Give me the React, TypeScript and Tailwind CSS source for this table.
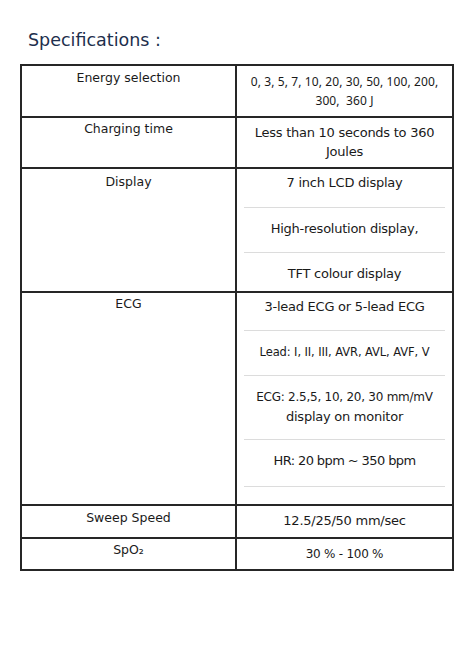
const font = { fontFamily: '"DejaVu Sans", "Noto Sans", sans-serif' };

type Spec = {
  label: React.ReactNode;
  height: string;
  labelPad: string;
  values: { text: React.ReactNode; h: string; cls?: string }[];
  simple?: boolean;
};

// right column text defaults to 13px with slight negative tracking
const specs: Spec[] = [
  {
    label: "Energy selection",
    height: "h-[52px]",
    labelPad: "pt-[3px]",
    values: [
      {
        text: <>0, 3, 5, 7, 10, 20, 30, 50, 100, 200,<br />300, &nbsp;360 J</>,
        h: "",
        cls: "pt-[6px] !text-[12px] !tracking-[0.1px] leading-[19px] font-['Noto_Sans'] whitespace-nowrap",
      },
    ],
    simple: true,
  },
  {
    label: "Charging time",
    height: "h-[51px]",
    labelPad: "pt-[2px]",
    values: [{ text: <>Less than 10 seconds to 360<br />Joules</>, h: "", cls: "pt-[5px] leading-[19px]" }],
    simple: true,
  },
  {
    label: "Display",
    height: "h-[124px]",
    labelPad: "pt-[4px]",
    values: [
      { text: "7 inch LCD display", h: "h-[39px]", cls: "pt-[5px]" },
      { text: "High-resolution display,", h: "h-[45px]", cls: "pt-[12px]" },
      { text: "TFT colour display", h: "flex-1", cls: "pt-[12px]" },
    ],
  },
  {
    label: "ECG",
    height: "h-[213px]",
    labelPad: "pt-[2px]",
    values: [
      { text: "3-lead ECG or 5-lead ECG", h: "h-[38px]", cls: "pt-[5px]" },
      { text: "Lead: I, II, III, AVR, AVL, AVF, V", h: "h-[45px]", cls: "pt-[12px] !text-[11.5px] !tracking-[-0.1px]" },
      {
        text: <>ECG: 2.5,5, 10, 20, 30 mm/mV<br /><span className="text-[13px]">display on monitor</span></>,
        h: "h-[64px]",
        cls: "pt-[12px] leading-[19px] !text-[12px]",
      },
      { text: "HR: 20 bpm ~ 350 bpm", h: "h-[47px]", cls: "pt-[12px] !tracking-[-0.6px]" },
      { text: "", h: "flex-1", cls: "" },
    ],
  },
  {
    label: "Sweep Speed",
    height: "h-[33px]",
    labelPad: "pt-[3px]",
    values: [{ text: "12.5/25/50 mm/sec", h: "", cls: "pt-[6px]" }],
    simple: true,
  },
  {
    label: <>SpO₂</>,
    height: "h-[30px]",
    labelPad: "pt-[2px]",
    values: [{ text: "30 % - 100 %", h: "", cls: "pt-[6px] !text-[12px]" }],
    simple: true,
  },
];

export default function App() {
  return (
    <div className="w-[474px] h-[669px] bg-white text-[#1a1a1a]" style={font}>
      <h1 className="pl-[28px] pt-[27px] text-[17.5px] leading-[26px] text-[#1e2f4d]">Specifications :</h1>
      <div className="mt-[11px] ml-[20px] w-[434px] border-2 border-[#262626]">
        {specs.map((s, i) => (
          <div
            key={i}
            className={`flex ${s.height} ${i < specs.length - 1 ? "border-b-2 border-[#262626]" : ""}`}
          >
            <div className={`w-[215px] shrink-0 border-r-2 border-[#262626] text-center text-[12.5px] leading-[18px] ${s.labelPad}`}>
              {s.label}
            </div>
            <div className="flex-1 flex flex-col px-[7px]">
              {s.values.map((v, j) => (
                <div
                  key={j}
                  className={`text-center text-[13px] tracking-[-0.25px] leading-[18px] ${v.h} ${v.cls ?? ""} ${
                    !s.simple && j < s.values.length - 1 ? "border-b border-[#dcdcdc]" : ""
                  }`}
                >
                  {v.text}
                </div>
              ))}
            </div>
          </div>
        ))}
      </div>
    </div>
  );
}
